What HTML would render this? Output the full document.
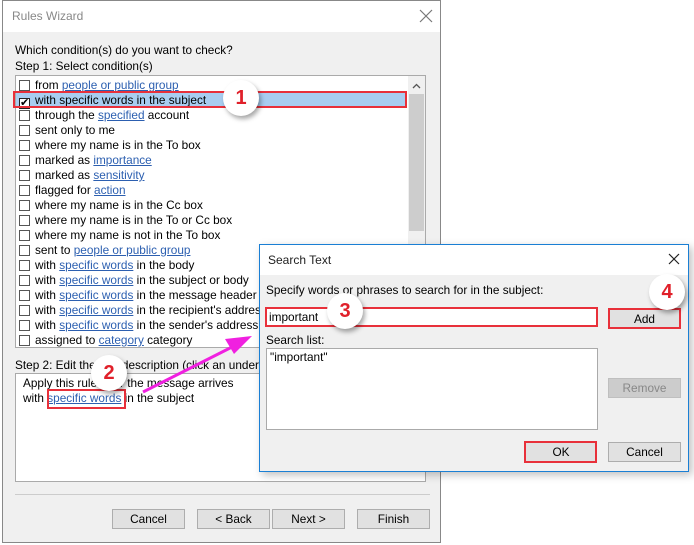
<!DOCTYPE html>
<html><head><style>
*{margin:0;padding:0;box-sizing:border-box}
body{width:694px;height:545px;background:#fff;position:relative;overflow:hidden;font-family:"Liberation Sans",sans-serif;font-size:11.8px;color:#000}
.a{position:absolute}
.lnk{color:#2c5fb0;text-decoration:underline}
.row{position:absolute;left:19px;height:15px;line-height:15px;white-space:nowrap}
.cb{display:inline-block;width:11px;height:11px;border:1px solid #555;background:#fff;vertical-align:-2px;margin-right:5px}
.btn{position:absolute;background:#e1e1e1;border:1px solid #adadad;text-align:center;line-height:18px;height:20px}
.red{position:absolute;border:2px solid #e8303a}
.circ{position:absolute;width:36px;height:36px;border-radius:50%;background:#fff;box-shadow:2px 3px 5px rgba(0,0,0,.35);color:#e0202a;font-weight:bold;font-size:20px;text-align:center;line-height:36px}
</style></head><body>
<div class="a" style="left:2px;top:0;width:439px;height:543px;border:1px solid #888;background:#f0f0f0"></div>
<div class="a" style="left:3px;top:1px;width:437px;height:31px;background:#fff"></div>
<div class="a" style="left:12px;top:9px;color:#888;font-size:12px">Rules Wizard</div>
<svg class="a" style="left:419px;top:9px" width="14" height="14"><path d="M1 1L13 13M13 1L1 13" stroke="#777" stroke-width="1.2"/></svg>
<div class="a" style="left:15px;top:43px">Which condition(s) do you want to check?</div>
<div class="a" style="left:15px;top:59px">Step 1: Select condition(s)</div>
<div class="a" style="left:15px;top:75px;width:411px;height:273px;border:1px solid #aaa;background:#fff"></div>
<div class="a" style="left:408px;top:76px;width:17px;height:271px;background:#f0f0f0"></div>
<div class="a" style="left:409px;top:94px;width:15px;height:137px;background:#cdcdcd"></div>
<svg class="a" style="left:412px;top:83px" width="9" height="6"><path d="M1 5L4.5 1.5L8 5" stroke="#555" stroke-width="1.3" fill="none"/></svg>
<div class="a" style="left:16px;top:93px;width:390px;height:14px;background:#a8cdf0"></div>
<div class="row" style="top:78px"><span class="cb"></span>from <span class="lnk">people or public group</span></div>
<div class="row" style="top:93px"><span class="cb" style="border-color:#222;font-size:11px;line-height:9px;text-align:center">✔</span>with specific words in the subject</div>
<div class="row" style="top:108px"><span class="cb"></span>through the <span class="lnk">specified</span> account</div>
<div class="row" style="top:123px"><span class="cb"></span>sent only to me</div>
<div class="row" style="top:138px"><span class="cb"></span>where my name is in the To box</div>
<div class="row" style="top:153px"><span class="cb"></span>marked as <span class="lnk">importance</span></div>
<div class="row" style="top:168px"><span class="cb"></span>marked as <span class="lnk">sensitivity</span></div>
<div class="row" style="top:183px"><span class="cb"></span>flagged for <span class="lnk">action</span></div>
<div class="row" style="top:198px"><span class="cb"></span>where my name is in the Cc box</div>
<div class="row" style="top:213px"><span class="cb"></span>where my name is in the To or Cc box</div>
<div class="row" style="top:228px"><span class="cb"></span>where my name is not in the To box</div>
<div class="row" style="top:243px"><span class="cb"></span>sent to <span class="lnk">people or public group</span></div>
<div class="row" style="top:258px"><span class="cb"></span>with <span class="lnk">specific words</span> in the body</div>
<div class="row" style="top:273px"><span class="cb"></span>with <span class="lnk">specific words</span> in the subject or body</div>
<div class="row" style="top:288px"><span class="cb"></span>with <span class="lnk">specific words</span> in the message header</div>
<div class="row" style="top:303px"><span class="cb"></span>with <span class="lnk">specific words</span> in the recipient's address</div>
<div class="row" style="top:318px"><span class="cb"></span>with <span class="lnk">specific words</span> in the sender's address</div>
<div class="row" style="top:333px"><span class="cb"></span>assigned to <span class="lnk">category</span> category</div>
<div class="red" style="left:13px;top:91px;width:394px;height:17px"></div>
<div class="a" style="left:15px;top:358px;white-space:nowrap">Step 2: Edit the rule description (click an underlined value)</div>
<div class="a" style="left:15px;top:373px;width:411px;height:109px;border:1px solid #aaa;background:#fff"></div>
<div class="a" style="left:23px;top:376px">Apply this rule after the message arrives</div>
<div class="a" style="left:23px;top:391px">with <span class="lnk">specific words</span> in the subject</div>
<div class="red" style="left:47px;top:389px;width:79px;height:20px"></div>
<div class="a" style="left:15px;top:494px;width:415px;height:1px;background:#ccc"></div>
<div class="btn" style="left:112px;top:509px;width:73px">Cancel</div>
<div class="btn" style="left:197px;top:509px;width:73px">&lt; Back</div>
<div class="btn" style="left:272px;top:509px;width:73px">Next &gt;</div>
<div class="btn" style="left:357px;top:509px;width:73px">Finish</div>
<svg class="a" style="left:0;top:0" width="694" height="545"><line x1="143" y1="392" x2="236" y2="345" stroke="#f020e0" stroke-width="3"/><polygon points="252,336 225,339 234,354" fill="#f020e0"/></svg>
<div class="a" style="left:259px;top:244px;width:430px;height:228px;border:1px solid #1a7fd4;background:#f0f0f0;box-shadow:3px 3px 8px rgba(0,0,0,.25)"></div>
<div class="a" style="left:260px;top:245px;width:428px;height:30px;background:#fff"></div>
<div class="a" style="left:268px;top:253px;font-size:12px;color:#222">Search Text</div>
<svg class="a" style="left:668px;top:253px" width="12" height="12"><path d="M1 1L11 11M11 1L1 11" stroke="#222" stroke-width="1.2"/></svg>
<div class="a" style="left:266px;top:283px">Specify words or phrases to search for in the subject:</div>
<div class="a" style="left:266px;top:308px;width:332px;height:19px;background:#fff"></div>
<div class="a" style="left:269px;top:310px">important</div>
<div class="red" style="left:265px;top:307px;width:333px;height:20px"></div>
<div class="btn" style="left:608px;top:309px;width:73px">Add</div>
<div class="red" style="left:608px;top:308px;width:73px;height:21px"></div>
<div class="a" style="left:266px;top:333px">Search list:</div>
<div class="a" style="left:266px;top:348px;width:332px;height:82px;border:1px solid #aaa;background:#fff"></div>
<div class="a" style="left:270px;top:350px">"important"</div>
<div class="btn" style="left:608px;top:378px;width:73px;background:#ccc;border-color:#bfbfbf;color:#888">Remove</div>
<div class="btn" style="left:525px;top:442px;width:72px">OK</div>
<div class="red" style="left:524px;top:441px;width:73px;height:22px"></div>
<div class="btn" style="left:608px;top:442px;width:73px">Cancel</div>
<div class="circ" style="left:223px;top:80px">1</div>
<div class="circ" style="left:91px;top:355px">2</div>
<div class="circ" style="left:327px;top:293px">3</div>
<div class="circ" style="left:649px;top:274px">4</div>
</body></html>
